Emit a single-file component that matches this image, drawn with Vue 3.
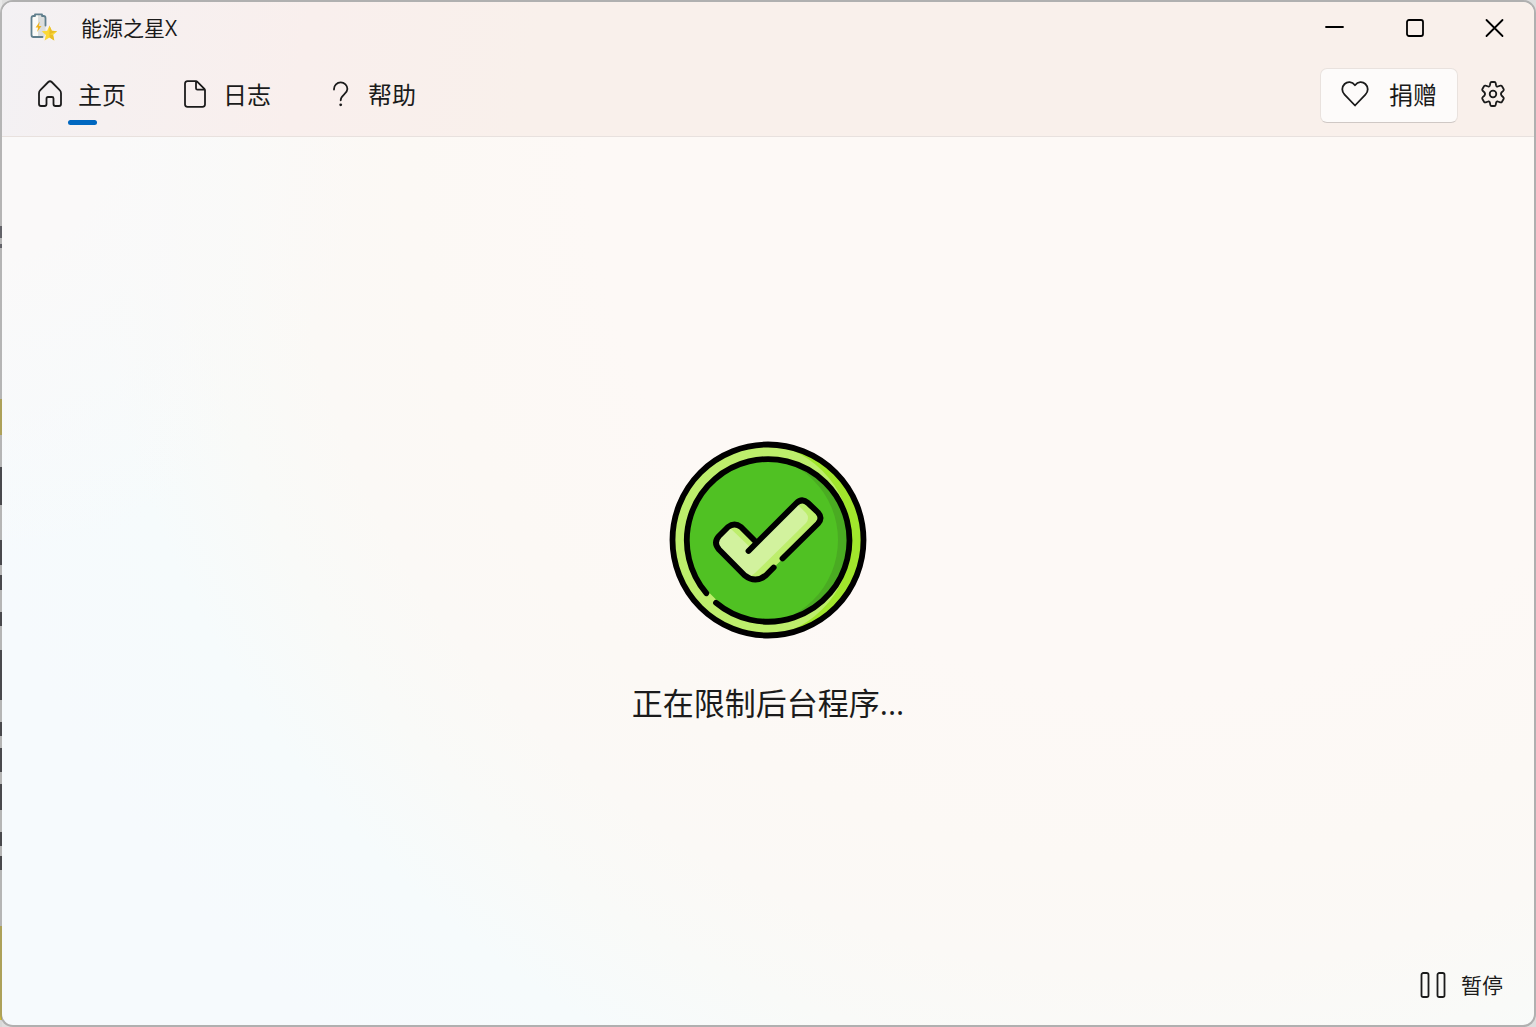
<script setup>
import { ref } from 'vue'

const active = ref('home')
const paused = ref(false)

const tabs = [
  { id: 'home', label: '主页' },
  { id: 'log', label: '日志' },
  { id: 'help', label: '帮助' }
]
</script>

<template>
  <div class="desktop">
    <div class="window">
      <header class="header">
        <div class="title-bar">
          <svg class="app-icon" viewBox="0 0 30 30">
            <defs>
              <linearGradient id="batteryGrad" x1="0" x2="1">
                <stop offset="0.45" stop-color="#fbfbf8" />
                <stop offset="0.5" stop-color="#dcdedd" />
              </linearGradient>
            </defs>
            <path d="M15 24H5.500q-2 0-2-2V5q0-2 2-2H7V1.300h7V3h1.500q2 0 2 2v13q0 6-2.500 6z" fill="url(#batteryGrad)" stroke="none" />
            <path d="M14.500 24H5.500q-2 0-2-2V5q0-2 2-2H7V1.300h7V3h1.500q2 0 2 2v7.500" stroke="#607f8d" stroke-width="1.800" />
            <path d="M11.800 8.500 7.600 14.500h2.500l-1 4.500 4.400-6h-2.700z" fill="#efb31d" />
            <path d="m21.500 12.500 2.300 5.200 5.400.6-4.100 3.700 1.200 5.500-4.800-2.900-4.900 2.900 1.300-5.500-4.200-3.700 5.500-.6z" fill="#fbd836" />
            <path d="m21.500 12.500 2.300 5.200 5.400.6-7.700 3zM21.500 21.300l3.600.7 1.200 5.500-4.800-2.900z" fill="#e8bd27" />
          </svg>
          <h1 class="title">能源之星X</h1>
          <div class="caption">
            <button type="button" aria-label="最小化">
              <svg viewBox="0 0 20 20"><path d="M2 9h17" /></svg>
            </button>
            <button type="button" aria-label="最大化">
              <svg viewBox="0 0 20 20"><rect x="3" y="2" width="16" height="16" rx="2" /></svg>
            </button>
            <button type="button" aria-label="关闭">
              <svg viewBox="0 0 20 20"><path d="m2.500 2 16 16M18.500 2l-16 16" /></svg>
            </button>
          </div>
        </div>

        <div class="toolbar">
          <nav class="tabs">
            <button
              v-for="tab in tabs"
              :key="tab.id"
              type="button"
              class="tab"
              :class="{ active: active === tab.id }"
              @click="active = tab.id"
            >
              <svg class="icon" viewBox="0 0 24 28">
                <path v-if="tab.id === 'home'" d="M2.300 10.200 10.300 2q1.700-1.600 3.400 0l8 8.200q1.300 1.200 1.300 3V24q0 2-2 2h-3.500q-2 0-2-2v-5.500q0-1.500-1.500-1.500h-4q-1.500 0-1.500 1.500V24q0 2-2 2H3q-2 0-2-2V13.200q0-1.800 1.300-3z" />
                <path v-else-if="tab.id === 'log'" d="M13 1.200H4.500Q2 1.200 2 3.700v20.600q0 2.500 2.500 2.500h15q2.500 0 2.500-2.500V10.200q0-.8-.6-1.400l-7-7q-.6-.6-1.400-.6zM13 1.500v6.700q0 1.500 1.500 1.500h7" />
                <g v-else>
                  <path d="M6 9.500V9a6.700 6.700 0 0 1 13.400 0c0 5-6.700 5.800-6.700 11.300" />
                  <circle class="dot" cx="12.700" cy="24.800" r="1.400" />
                </g>
              </svg>
              <span>{{ tab.label }}</span>
            </button>
          </nav>

          <div class="actions">
            <button type="button" class="donate">
              <svg class="heart" viewBox="0 0 28 26">
                <path d="M14 4.300C11 .3 6.500.2 3.600 3 .5 6 .5 10.500 3.600 13.600L14 24.500l10.400-10.900C27.500 10.500 27.500 6 24.400 3 21.500.2 17 .3 14 4.300z" />
              </svg>
              <span>捐赠</span>
            </button>
            <button type="button" class="settings" aria-label="设置">
              <svg viewBox="0 0 26 26">
                <path d="M10.300 2.200Q10.500 1 11.700 1h2.600q1.200 0 1.400 1.200l.4 2.200q.3 1.400 1.700 1.100l2.500-.8q1.100-.4 1.700.6l1.600 2.700q.6 1-.3 1.800l-1.600 1.400q-1.500 1.800 0 3.600l1.600 1.400q.9.800.3 1.800L22 20.700q-.6 1-1.700.6l-2.500-.8q-1.400-.3-1.700 1.100l-.4 2.200Q15.500 25 14.300 25h-2.600q-1.200 0-1.400-1.200l-.4-2.200q-.3-1.400-1.700-1.100l-2.500.8q-1.100.4-1.700-.6L2.400 18q-.6-1 .3-1.800l1.600-1.400q1.500-1.800 0-3.600L2.700 9.800Q1.800 9 2.400 8L4 5.300q.6-1 1.700-.6l2.500.8q1.400.3 1.700-1.100z" />
                <circle cx="13" cy="13" r="3.300" />
              </svg>
            </button>
          </div>
        </div>
      </header>

      <main class="content">
        <section class="status">
          <svg class="badge" viewBox="9 11 198 198">
            <defs>
              <clipPath id="ringClip"><circle cx="108" cy="110" r="96" /></clipPath>
              <clipPath id="discClip"><circle cx="108" cy="110" r="81" /></clipPath>
            </defs>
            <circle cx="108" cy="110" r="96" fill="#a1e62c" />
            <ellipse cx="93" cy="110" rx="98" ry="98" fill="#bdee6c" clip-path="url(#ringClip)" />
            <circle cx="108" cy="110" r="81" fill="#4aab22" />
            <circle cx="93" cy="110" r="85" fill="#50c123" clip-path="url(#discClip)" />
            <path d="M45 162 57 174" stroke="#bdee6c" stroke-width="5" />
            <path d="M59 106 68 97Q74.500 92 81 97L94.500 111 136 73.500Q142 67.500 148 73L159 83Q163.500 88.500 158.500 95L106 144.700Q95 153 84.500 144.700L59 119.500Q53 112.500 59 106z" fill="#bdee6c" />
            <path d="M59 106 70 98 92 119 138 75 146 83Q150 88 146 93L95 143Q88 149 84.500 144.700L59 119.500Q53 112.500 59 106z" fill="#d2f29e" />
            <g class="outline">
              <circle cx="108" cy="110" r="95.500" />
              <path d="M46.300 163.200A81.300 81.300 0 1 1 56 172.800" />
              <path d="M113.700 137.500 106 145.200Q95.500 154 84.500 145.200L59 119.500Q53 112.500 59 106L68 97Q74.500 92 81 97L94.500 110.500" />
              <path d="M88.500 121 136 73.500Q142 67.500 148 73L158 82.500Q163 88 158 93.500L122.500 128.500" />
            </g>
          </svg>
          <p class="message">正在限制后台程序...</p>
        </section>

        <button type="button" class="pause" :aria-pressed="paused" @click="paused = !paused">
          <svg viewBox="0 0 26 26">
            <rect x="1.500" y="1" width="7" height="24" rx="1.800" />
            <rect x="17.500" y="1" width="7" height="24" rx="1.800" />
          </svg>
          <span>暂停</span>
        </button>
      </main>
    </div>
  </div>
</template>

<style>
body {
  margin: 0;
}
</style>

<style scoped>
.desktop {
  display: flex;
  box-sizing: border-box;
  min-height: 100vh;
  background: linear-gradient(
    #e8e8e8 0 226px, #444450 226px 238px, #e8e8e8 238px 244px, #444450 244px 248px,
    #e8e8e8 248px 399px, #d8c030 399px 435px, #e8e8e8 435px 467px, #111118 467px 505px,
    #e8e8e8 505px 540px, #111118 540px 565px, #e8e8e8 565px 575px, #111118 575px 590px,
    #e8e8e8 590px 612px, #111118 612px 626px, #e8e8e8 626px 650px, #111118 650px 700px,
    #e8e8e8 700px 722px, #111118 722px 736px, #e8e8e8 736px 748px, #111118 748px 772px,
    #e8e8e8 772px 784px, #111118 784px 810px, #e8e8e8 810px 832px, #111118 832px 846px,
    #e8e8e8 846px 856px, #111118 856px 870px, #e8e8e8 870px 926px, #d8c030 926px 1020px,
    #d8d8d8 1020px
  ) 0 0 / 2px 100% no-repeat #dedede;
  color: #1b1b1b;
  font-family: "Open Sans", "Noto Sans CJK SC", sans-serif;
}

.window {
  flex: 1;
  display: flex;
  flex-direction: column;
  overflow: hidden;
  border: 2px solid rgba(130, 130, 130, 0.5);
  border-radius: 13px;
  background:
    radial-gradient(ellipse 24% 42% at 0% 12%, #faf9f9 30%, rgba(250, 249, 249, 0) 100%),
    radial-gradient(
      ellipse 81% 116% at 75% 15%,
      #fdf9f6 0%, #fdf9f6 45%, #fcf9f5 60%, #fbf9f6 69%, #f9faf8 77%, #f6fbfc 86%, #f6fafd 100%
    );
  background-clip: padding-box;
}

button {
  display: flex;
  align-items: center;
  padding: 0;
  border: 0;
  background: none;
  color: inherit;
  font-family: inherit;
}

svg {
  display: block;
  flex: none;
  fill: none;
  stroke: currentColor;
  stroke-width: 1.8;
  stroke-linecap: round;
  stroke-linejoin: round;
}

.header {
  border-bottom: 1px solid #e8e1de;
  background: linear-gradient(100deg, #f3f1f4 0%, #f6f0f0 8%, #f9efed 20%, #f9f0eb 35%, #f9f0eb 100%);
}

.title-bar {
  display: flex;
  align-items: center;
  height: 52px;
  padding-left: 26px;
}

.app-icon {
  width: 30px;
  height: 30px;
  stroke: none;
}

.title {
  flex: 1;
  margin: 0 0 0 23px;
  font-size: 21px;
  font-weight: 400;
  line-height: 28px;
}

.caption {
  display: flex;
  height: 100%;
}

.caption button {
  justify-content: center;
  width: 80px;
  color: #000;
}

.caption svg {
  width: 20px;
  height: 20px;
}

.toolbar {
  display: flex;
  align-items: center;
  justify-content: space-between;
  box-sizing: border-box;
  height: 82px;
  padding: 0 18px 0 8px;
}

.toolbar svg {
  margin-bottom: 3px;
}

.tabs {
  display: flex;
  gap: 1px;
}

.tab {
  position: relative;
  gap: 16px;
  height: 60px;
  padding: 0 28px;
  font-size: 24px;
  line-height: 32px;
}

.tab.active::after {
  content: '';
  position: absolute;
  left: 50%;
  bottom: 0;
  width: 29px;
  height: 5px;
  margin-left: -14px;
  border-radius: 3px;
  background: #0067c0;
}

.icon {
  width: 24px;
  height: 28px;
}

.dot {
  fill: currentColor;
  stroke: none;
}

.actions {
  display: flex;
  align-items: center;
  gap: 12px;
}

.donate {
  gap: 20px;
  height: 55px;
  padding: 0 20px;
  border: 1px solid #e9e2de;
  border-bottom-color: #cfc8c5;
  border-radius: 7px;
  background: #fdfbfa;
  font-size: 24px;
  line-height: 32px;
}

.heart {
  width: 28px;
  height: 26px;
}

.settings {
  justify-content: center;
  width: 46px;
  height: 46px;
}

.settings svg {
  width: 26px;
  height: 26px;
}

.content {
  flex: 1;
  display: flex;
  flex-direction: column;
}

.status {
  flex: 1;
  display: flex;
  flex-direction: column;
  align-items: center;
  justify-content: center;
  padding-top: 72px;
}

.badge {
  width: 198px;
  height: 198px;
  stroke: none;
}

.outline {
  stroke: #000;
  stroke-width: 5.8;
}

.message {
  margin: 40px 0 0;
  font-size: 31px;
  line-height: 48px;
}

.pause {
  align-self: flex-end;
  gap: 15px;
  height: 52px;
  margin: 0 31px 14px 0;
  font-size: 21px;
  line-height: 28px;
}

.pause svg {
  width: 26px;
  height: 26px;
}
</style>
